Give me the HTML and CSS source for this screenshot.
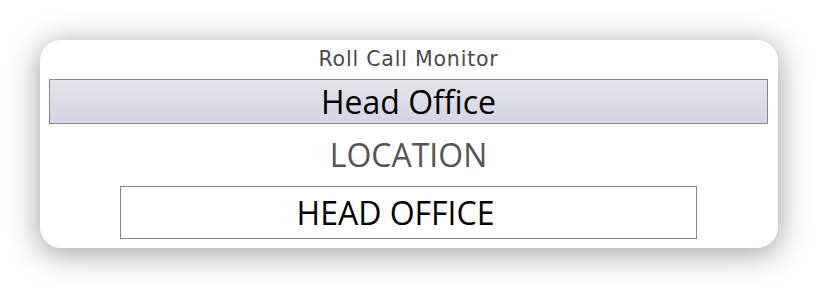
FILE: index.html
```html
<!DOCTYPE html>
<html lang="en">
<head>
    <meta charset="UTF-8">
    <meta name="viewport" content="width=device-width, initial-scale=1.0">
    <title>Roll Call Monitor</title>
    <link rel="stylesheet" href="styles.css">
</head>
<body>
    <div class="monitor_card">
        <div class="monitor_title">Roll Call Monitor</div>
        <div class="site_bar">Head Office</div>
        <div class="location_label">LOCATION</div>
        <div class="location_box">HEAD OFFICE</div>
    </div>
</body>
</html>
```

FILE: styles.css
```css
* {
    margin: 0;
    padding: 0;
    box-sizing: border-box;
}

body {
    background-color: white;
    font-family: "Open Sans", "Liberation Sans", sans-serif;
}

.monitor_card {
    margin: 40px;
    width: 738px;
    height: 208px;
    padding: 0 10px 9px 9px;
    background-color: white;
    border-radius: 21px;
    box-shadow: 0 5px 30px 2px rgba(0, 0, 0, 0.35);
    display: flex;
    flex-direction: column;
    align-items: center;
}

.monitor_title {
    height: 39px;
    line-height: 38px;
    font-family: "DejaVu Sans", "Open Sans", sans-serif;
    font-size: 20.5px;
    letter-spacing: 0.8px;
    color: #4a4a4a;
}

.site_bar {
    width: 100%;
    height: 45px;
    line-height: 43px;
    text-align: center;
    font-size: 32px;
    color: black;
    border: 1px solid #888;
    background: linear-gradient(#e4e4ea, #d5d4e6);
}

.location_label {
    height: 62px;
    line-height: 62px;
    font-size: 32px;
    color: #555;
}

.location_box {
    width: 577px;
    height: 53px;
    line-height: 51px;
    padding-right: 25px;
    text-align: center;
    font-size: 32px;
    color: black;
    border: 1px solid #888;
    margin-right: 1px;
}
```
